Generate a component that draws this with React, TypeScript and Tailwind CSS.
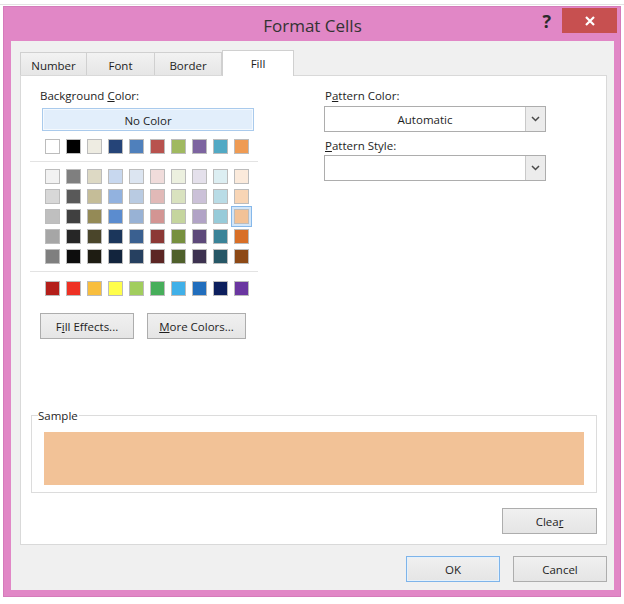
import React from "react";

const themeTop = ["#ffffff", "#000000", "#eeece2", "#254478", "#4f80bc", "#b8524e", "#a0b960", "#7d64a0", "#52a9c4", "#ef9b53"];
const tints = [
  ["#f2f2f2", "#7f7f7f", "#ddd9c4", "#c8d8ef", "#dce5f1", "#f0dcdb", "#ecf0df", "#e4e0eb", "#dceef2", "#fbeadb"],
  ["#d8d8d8", "#595959", "#c5bd98", "#92b2df", "#b9cbe2", "#e1b9b7", "#d9e2bf", "#cbc1d8", "#b9dce6", "#f8d5b5"],
  ["#bfbfbf", "#404040", "#948a56", "#5b8ccf", "#98b2d5", "#d39593", "#c5d59e", "#b1a3c6", "#97cbd9", "#f2c297"],
  ["#a6a6a6", "#262626", "#4a452a", "#1b365b", "#3a6090", "#8c3835", "#77903f", "#5d497a", "#3a8398", "#d86f27"],
  ["#7f7f7f", "#0d0d0d", "#1e1c12", "#12243d", "#264060", "#5c2624", "#4f602b", "#3d3250", "#265766", "#8d4916"],
];
const standard = ["#b41f1a", "#ee3124", "#f8be3e", "#fffe4b", "#a1cd5d", "#47ae5b", "#40b0e8", "#216ebd", "#0c1f5d", "#6a36a0"];

function Swatch({ color, selected }: { color: string; selected?: boolean }) {
  return (
    <div
      className={
        "w-[15px] h-[15px] border border-[#bcbcbc] shrink-0 " +
        (selected ? "shadow-[0_0_0_2px_#d3e6f8,0_0_0_3px_#86b8ea]" : "")
      }
      style={{ backgroundColor: color }}
    />
  );
}

function SwatchRow({ colors, selectedIndex }: { colors: string[]; selectedIndex?: number }) {
  return (
    <div className="flex gap-[6px]">
      {colors.map((c, i) => (
        <Swatch key={i} color={c} selected={i === selectedIndex} />
      ))}
    </div>
  );
}

function Chevron() {
  return (
    <svg width="9" height="6" viewBox="0 0 9 6">
      <path d="M1 1 L4.5 4.5 L8 1" fill="none" stroke="#4a4a4a" strokeWidth="1.5" />
    </svg>
  );
}

function Combo({ value }: { value?: string }) {
  return (
    <div className="w-[222px] h-[26px] border border-[#adadad] bg-white flex">
      <div className="flex-1 flex items-center justify-center pt-[2px] text-[#1e1e1e]">{value}</div>
      <div className="w-[20px] border-l border-[#c9c9c9] bg-[#ececec] flex items-center justify-center">
        <Chevron />
      </div>
    </div>
  );
}

function Btn({ children, w, primary }: { children: React.ReactNode; w: string; primary?: boolean }) {
  return (
    <div
      className={
        "h-[26px] flex items-center justify-center pt-[2px] text-[#1e1e1e] bg-gradient-to-b from-[#f0f0f0] to-[#e5e5e5] border " +
        (primary ? "border-[#7eb4ea] shadow-[inset_0_0_0_1px_#e5f1fb]" : "border-[#adadad]") +
        " " +
        w
      }
    >
      {children}
    </div>
  );
}

export default function App() {
  return (
    <div className="w-[624px] h-[604px] bg-white overflow-hidden font-['Open_Sans',sans-serif] text-[11.5px] text-[#1e1e1e]">
      {/* background strip */}
      <div className="h-[6px] flex items-start">
        <div className="h-[5px] w-full border-b border-[#e2e2e2]" />
      </div>
      <div className="ml-[3px] w-[618px] h-[591px] bg-[#e187c6] border border-[#d57bba] flex flex-col pl-[7px] pr-[6px] pb-[6px]">
        {/* title bar */}
        <div className="h-[35px] grid grid-cols-[1fr_auto_1fr]">
          <div />
          <div className="pt-[7px] text-[17px] leading-[24px] text-[#333333]">Format Cells</div>
          <div className="flex justify-end items-start -mr-[3px] pt-[1px]">
            <div className="mr-[11px] mt-[3px] text-[18px] leading-[20px] font-bold text-[#2b2b2b]">?</div>
            <div className="w-[55px] h-[25px] bg-[#c75050] flex items-center justify-center">
              <svg width="10" height="10" viewBox="0 0 10 10">
                <path d="M1 1 L9 9 M9 1 L1 9" stroke="#ffffff" strokeWidth="2.2" />
              </svg>
            </div>
          </div>
        </div>
        {/* client area */}
        <div className="flex-1 bg-[#f0f0f0] flex flex-col pt-[9px] pl-[9px] pr-[7px] pb-[8px]">
          {/* tabs */}
          <div className="h-[25px] flex items-end">
            <div className="w-[67px] h-[23px] border border-b-0 border-[#d0d0d0] bg-gradient-to-b from-[#f2f2f2] to-[#e6e6e6] flex items-center justify-center pt-[3px]">Number</div>
            <div className="w-[68px] h-[23px] border border-l-0 border-b-0 border-[#d0d0d0] bg-gradient-to-b from-[#f2f2f2] to-[#e6e6e6] flex items-center justify-center pt-[3px]">Font</div>
            <div className="w-[67px] h-[23px] border border-l-0 border-b-0 border-[#d0d0d0] bg-gradient-to-b from-[#f2f2f2] to-[#e6e6e6] flex items-center justify-center pt-[3px]">Border</div>
            <div className="w-[72px] h-[26px] -mb-px relative z-10 border border-b-0 border-[#d0d0d0] bg-white flex items-start justify-center pt-[4px]">Fill</div>
          </div>
          {/* panel */}
          <div className="h-[470px] border border-[#d9d9d9] bg-white flex flex-col">
            <div className="h-[263px] flex">
              {/* left column */}
              <div className="w-[280px] flex flex-col">
                <div className="mt-[12px] ml-[19px] leading-[16px]">
                  Background <span className="underline">C</span>olor:
                </div>
                <div className="mt-[4px] ml-[21px] w-[212px] h-[24px] border border-[#a9caec] bg-[#e2eefb] shadow-[inset_0_0_0_1px_#f4f9fe] flex items-center justify-center pt-[2px]">
                  No Color
                </div>
                <div className="mt-[8px] ml-[24px]">
                  <SwatchRow colors={themeTop} />
                </div>
                <div className="mt-[7px] ml-[9px] w-[228px] h-px bg-[#e3e3e3]" />
                <div className="mt-[7px] ml-[24px] flex flex-col gap-[5px]">
                  {tints.map((row, i) => (
                    <SwatchRow key={i} colors={row} selectedIndex={i === 2 ? 9 : undefined} />
                  ))}
                </div>
                <div className="mt-[7px] ml-[9px] w-[228px] h-px bg-[#e3e3e3]" />
                <div className="mt-[9px] ml-[24px]">
                  <SwatchRow colors={standard} />
                </div>
                <div className="mt-[17px] ml-[19px] flex gap-[13px]">
                  <Btn w="w-[94px]">
                    <span>
                      F<span className="underline">i</span>ll Effects...
                    </span>
                  </Btn>
                  <Btn w="w-[99px]">
                    <span>
                      <span className="underline">M</span>ore Colors...
                    </span>
                  </Btn>
                </div>
              </div>
              {/* right column */}
              <div className="flex flex-col ml-[23px]">
                <div className="mt-[12px] ml-[1px] leading-[16px]">
                  P<span className="underline">a</span>ttern Color:
                </div>
                <div className="mt-[2px]">
                  <Combo value="Automatic" />
                </div>
                <div className="mt-[6px] ml-[1px] leading-[16px]">
                  <span className="underline">P</span>attern Style:
                </div>
                <div className="mt-[1px]">
                  <Combo />
                </div>
              </div>
            </div>
            {/* sample */}
            <div className="mt-[76px] ml-[10px] w-[566px] border border-[#dcdcdc] relative">
              <div className="absolute -top-[8px] left-[6px] bg-white leading-[16px] pr-[1px]">Sample</div>
              <div className="mt-[16px] mb-[7px] mx-[12px] h-[53px] bg-[#f2c297]" />
            </div>
            <div className="mt-[15px] flex justify-end mr-[9px]">
              <Btn w="w-[95px]">
                <span>
                  Clea<span className="underline">r</span>
                </span>
              </Btn>
            </div>
          </div>
          {/* dialog buttons */}
          <div className="mt-[11px] flex justify-end gap-[13px]">
            <Btn w="w-[94px] h-[25px]" primary>
              OK
            </Btn>
            <Btn w="w-[94px]">Cancel</Btn>
          </div>
        </div>
      </div>
    </div>
  );
}
